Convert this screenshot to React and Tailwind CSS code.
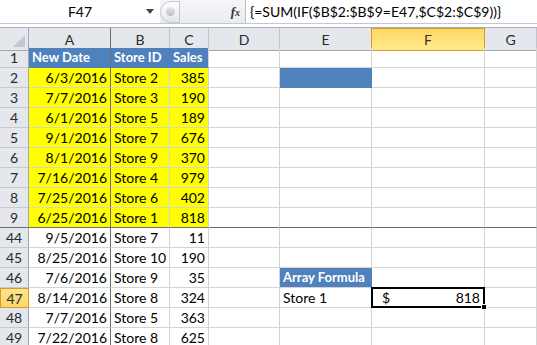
import React from "react";

const COLS = "grid-cols-[29px_82px_59px_39px_71px_92px_113px_1fr]";

const top = [
  ["2", "6/3/2016", "Store 2", "385"],
  ["3", "7/7/2016", "Store 3", "190"],
  ["4", "6/1/2016", "Store 5", "189"],
  ["5", "9/1/2016", "Store 7", "676"],
  ["6", "8/1/2016", "Store 9", "370"],
  ["7", "7/16/2016", "Store 4", "979"],
  ["8", "7/25/2016", "Store 6", "402"],
  ["9", "6/25/2016", "Store 1", "818"],
];

const bottom = [
  ["44", "9/5/2016", "Store 7", "11"],
  ["45", "8/25/2016", "Store 10", "190"],
  ["46", "7/6/2016", "Store 9", "35"],
  ["47", "8/14/2016", "Store 8", "324"],
  ["48", "7/7/2016", "Store 5", "363"],
  ["49", "7/22/2016", "Store 8", "625"],
];

function Cell({ children, className = "" }) {
  return (
    <div className={"h-[20px] border-r border-b border-[#d4d4d4] flex items-center px-[3px] whitespace-nowrap overflow-visible " + className}>
      {children}
    </div>
  );
}

function RowHead({ n, sel, last }) {
  return (
    <div
      className={
        "h-[20px] flex items-center justify-center border-r text-[#2b2b2b] " +
        (sel
          ? "bg-gradient-to-b from-[#ffe38c] to-[#fdd766] border border-[#d79b2e]"
          : "bg-[#e4e7ec] border-r-[#9fa7b3] border-b " + (last ? "border-b-[#6d6d6d]" : "border-b-[#c5cad1]"))
      }
    >
      {n}
    </div>
  );
}

function DataRow({ r, yellow, last }) {
  const [n, date, store, sales] = r;
  const bg = yellow ? "bg-[#ffff00]" : "";
  const lastB = last ? "border-b-[#6d6d6d]" : "";
  return (
    <div className={"grid " + COLS}>
      <RowHead n={n} sel={n === "47"} last={last} />
      <Cell className={"justify-end border-r-[#6d6d6d] " + bg + " " + lastB}>{date}</Cell>
      <Cell className={bg + " " + lastB}>{store}</Cell>
      <Cell className={"justify-end " + bg + " " + lastB}>{sales}</Cell>
      <Cell className={lastB} />
      {n === "2" ? (
        <Cell className="bg-[#4f81bd] border-r-[#4f81bd] border-b-[#4f81bd]" />
      ) : n === "46" ? (
        <Cell className="bg-[#4f81bd] text-white font-bold text-[13px] border-r-[#4f81bd]">Array Formula</Cell>
      ) : n === "47" ? (
        <Cell>Store 1</Cell>
      ) : (
        <Cell className={lastB} />
      )}
      {n === "47" ? (
        <div className="relative border-2 border-black -ml-px -mt-px h-[21px] flex items-center justify-between pl-[9px] pr-[3px]">
          <span>$</span>
          <span>818</span>
          <span className="absolute -right-[4px] -bottom-[4px] w-[6px] h-[6px] bg-black border border-white"></span>
        </div>
      ) : (
        <Cell className={lastB} />
      )}
      <Cell className={lastB} />
    </div>
  );
}

export default function App() {
  return (
    <div className="w-[537px] h-[345px] overflow-hidden bg-white text-[14px] text-black" style={{ fontFamily: "Lato, 'Open Sans', sans-serif" }}>
      {/* formula bar */}
      <div className="h-[24px] flex border-b border-[#c3c8cf] bg-white">
        <div className="w-[160px] relative flex items-center justify-center">
          <span>F47</span>
          <svg className="absolute right-[6px] top-[9px]" width="8" height="5" viewBox="0 0 8 5">
            <path d="M0 0h8L4 5z" fill="#444" />
          </svg>
        </div>
        <div className="w-[86px] flex items-center bg-gradient-to-b from-[#f5f6f8] to-[#e9ebee] border-r border-[#b9bec6]">
          <div className="w-[20px] h-[22px] rounded-l-full border border-[#c4c8ce] bg-gradient-to-b from-[#ffffff] to-[#e3e5e8] flex items-center justify-center">
            <div className="w-[9px] h-[9px] rounded-full bg-gradient-to-b from-[#e8e9eb] to-[#b9bcc1]"></div>
          </div>
          <div className="flex-1"></div>
          <span className="mr-[5px] italic font-bold text-[13px] text-[#333]" style={{ fontFamily: "'Liberation Serif', serif" }}>
            f<span className="text-[10px]">x</span>
          </span>
        </div>
        <div className="flex-1 flex items-center pl-[4px] whitespace-nowrap">{"{=SUM(IF($B$2:$B$9=E47,$C$2:$C$9))}"}</div>
      </div>
      <div className="h-[4px] bg-white border-b border-[#aab0b8]"></div>

      {/* column headers */}
      <div className={"grid " + COLS + " h-[20px] text-[#2b2b2b]"}>
        <div className="bg-[#e4e7ec] border-r border-b border-[#9fa7b3] relative">
          <svg className="absolute right-[3px] bottom-[3px]" width="12" height="12" viewBox="0 0 12 12">
            <path d="M12 0V12H0z" fill="#c3c7cd" />
          </svg>
        </div>
        {["A", "B", "C", "D", "E", "F", "G"].map((c) =>
          c === "F" ? (
            <div key={c} className="bg-gradient-to-b from-[#ffd862] to-[#ffe98c] border border-[#d39a32] -ml-px flex items-center justify-center text-[#333]">
              {c}
            </div>
          ) : (
            <div
              key={c}
              className={
                "bg-[#e4e7ec] border-b border-b-[#9fa7b3] border-r flex items-center justify-center " +
                (c === "A" ? "border-r-[#6d6d6d]" : "border-r-[#c0c5cc]")
              }
            >
              {c}
            </div>
          )
        )}
      </div>

      {/* row 1 */}
      <div className={"grid " + COLS}>
        <RowHead n="1" />
        <Cell className="bg-[#4f81bd] text-white font-bold text-[13px] border-r-[#6d6d6d] border-b-[#4f81bd]">New Date</Cell>
        <Cell className="bg-[#4f81bd] text-white font-bold text-[13px] border-r-[#4f81bd] border-b-[#4f81bd]">Store ID</Cell>
        <Cell className="bg-[#4f81bd] text-white font-bold text-[13px] border-b-[#4f81bd]">Sales</Cell>
        <Cell />
        <Cell />
        <Cell />
        <Cell />
      </div>

      {top.map((r, i) => (
        <DataRow key={r[0]} r={r} yellow last={i === top.length - 1} />
      ))}
      {bottom.map((r) => (
        <DataRow key={r[0]} r={r} />
      ))}
    </div>
  );
}
